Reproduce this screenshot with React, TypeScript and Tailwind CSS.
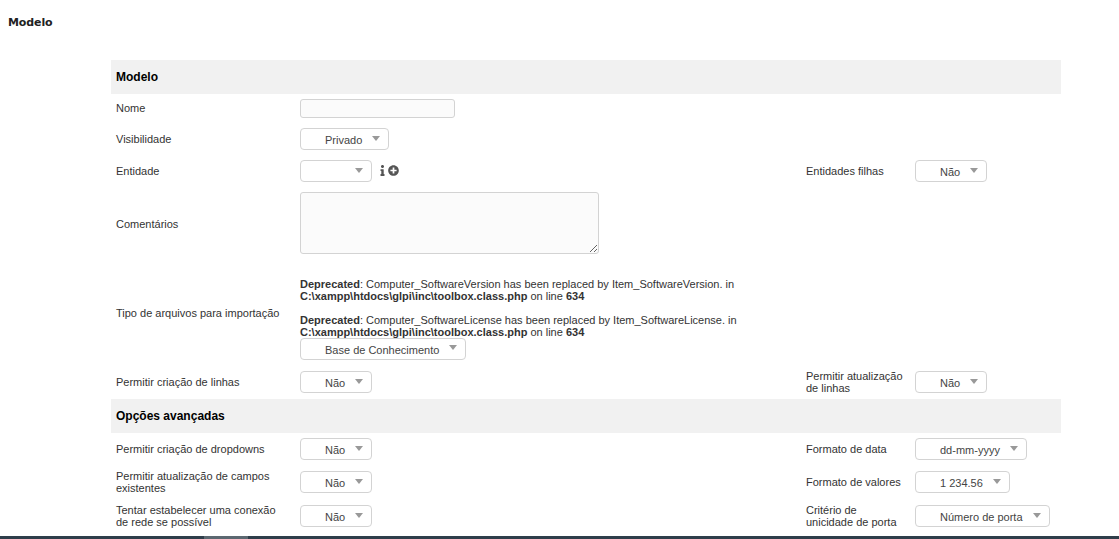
import type { ReactNode } from 'react';
import { FaInfo, FaPlusCircle } from 'react-icons/fa';

const Select = ({ value, className }: { value?: string; className: string }) => (
  <div
    className={`flex h-[22px] items-center justify-between rounded-[4px] border border-[#d3d3d3] bg-white pl-[24px] pr-[8px] text-[11px] leading-none text-[#444] ${className}`}
  >
    <span className="whitespace-nowrap pt-[3px]">{value}</span>
    <svg width="8" height="5" viewBox="0 0 8 5" className="mb-[2px] shrink-0">
      <path d="M0 0h8L4 5z" fill="#999" />
    </svg>
  </div>
);

const SectionHeader = ({ title }: { title: string }) => (
  <div className="flex h-[34px] items-center bg-[#f1f1f1] pl-[5px] text-[12px] font-bold text-black">
    {title}
  </div>
);

const Label = ({ children }: { children: ReactNode }) => (
  <div className="text-[11px] leading-[12px] text-[#333]">{children}</div>
);

interface RowProps {
  label: ReactNode;
  field: ReactNode;
  sideLabel?: ReactNode;
  sideField?: ReactNode;
  className?: string;
}

const Row = ({ label, field, sideLabel, sideField, className = '' }: RowProps) => (
  <div
    className={`grid grid-cols-[184px_506px_109px_1fr] items-center pl-[5px] ${className}`}
  >
    <Label>{label}</Label>
    <div>{field}</div>
    {sideLabel ? <Label>{sideLabel}</Label> : <div />}
    <div>{sideField}</div>
  </div>
);

const Notice = ({ name, replacement }: { name: string; replacement: string }) => (
  <p className="text-[11px] leading-[12px] text-[#333]">
    <b>Deprecated</b>: {name} has been replaced by {replacement}. in
    <br />
    <b>C:\xampp\htdocs\glpi\inc\toolbox.class.php</b> on line <b>634</b>
  </p>
);

export default function App() {
  return (
    <div className="relative h-[539px] w-[1119px] overflow-hidden bg-white font-['Liberation_Sans',Arial,sans-serif]">
      <h1 className="pl-2 pt-[16px] font-['DejaVu_Sans',Verdana,sans-serif] text-[11px] font-bold leading-[13px] tracking-[-0.1px] text-[#222]">
        Modelo
      </h1>

      <div className="ml-[111px] mt-[31px] w-[950px]">
        <SectionHeader title="Modelo" />

        <Row
          className="mb-px h-[28px]"
          label="Nome"
          field={
            <input className="block h-[19px] w-[155px] rounded-[3px] border border-[#d3d3d3] bg-[#fbfbfb]" />
          }
        />
        <Row
          className="h-[32px]"
          label="Visibilidade"
          field={<Select value="Privado" className="w-[89px]" />}
        />
        <Row
          className="h-[32px]"
          label="Entidade"
          field={
            <div className="flex items-center">
              <Select className="w-[72px]" />
              <FaInfo className="mb-[2px] ml-[5px] size-[11px] text-[#555]" />
              <FaPlusCircle className="mb-[2px] size-[11px] text-[#555]" />
            </div>
          }
          sideLabel="Entidades filhas"
          sideField={<Select value="Não" className="w-[72px]" />}
        />
        <Row
          className="h-[72px]"
          label={<div className="pt-[2px]">Comentários</div>}
          field={
            <textarea className="block h-[62px] w-[299px] rounded-[3px] border border-[#d3d3d3] bg-[#fbfbfb]" />
          }
        />
        <Row
          className="h-[107px]"
          label="Tipo de arquivos para importação"
          field={
            <div className="w-[450px] pb-px pt-[13px]">
              <Notice name="Computer_SoftwareVersion" replacement="Item_SoftwareVersion" />
              <div className="mt-[12px]">
                <Notice name="Computer_SoftwareLicense" replacement="Item_SoftwareLicense" />
              </div>
              <Select value="Base de Conhecimento" className="w-[166px]" />
            </div>
          }
        />
        <Row
          className="h-[33px] pb-px"
          label="Permitir criação de linhas"
          field={<Select value="Não" className="w-[72px]" />}
          sideLabel={
            <>
              Permitir atualização
              <br />
              de linhas
            </>
          }
          sideField={<Select value="Não" className="w-[72px]" />}
        />

        <SectionHeader title="Opções avançadas" />

        <Row
          className="h-[32px]"
          label="Permitir criação de dropdowns"
          field={<Select value="Não" className="w-[72px]" />}
          sideLabel="Formato de data"
          sideField={<Select value="dd-mm-yyyy" className="w-[112px]" />}
        />
        <Row
          className="mt-px h-[32px]"
          label={
            <>
              Permitir atualização de campos
              <br />
              existentes
            </>
          }
          field={<Select value="Não" className="w-[72px]" />}
          sideLabel="Formato de valores"
          sideField={<Select value="1 234.56" className="w-[95px]" />}
        />
        <Row
          className="mt-[2px] h-[32px]"
          label={
            <>
              Tentar estabelecer uma conexão
              <br />
              de rede se possível
            </>
          }
          field={<Select value="Não" className="w-[72px]" />}
          sideLabel={
            <>
              Critério de
              <br />
              unicidade de porta
            </>
          }
          sideField={<Select value="Número de porta" className="w-[135px]" />}
        />
      </div>

      <div className="absolute inset-x-0 bottom-0 flex h-[3px] bg-[#2f3e4a]">
        <div className="ml-[204px] w-[44px] bg-[#5c6871]" />
      </div>
    </div>
  );
}
